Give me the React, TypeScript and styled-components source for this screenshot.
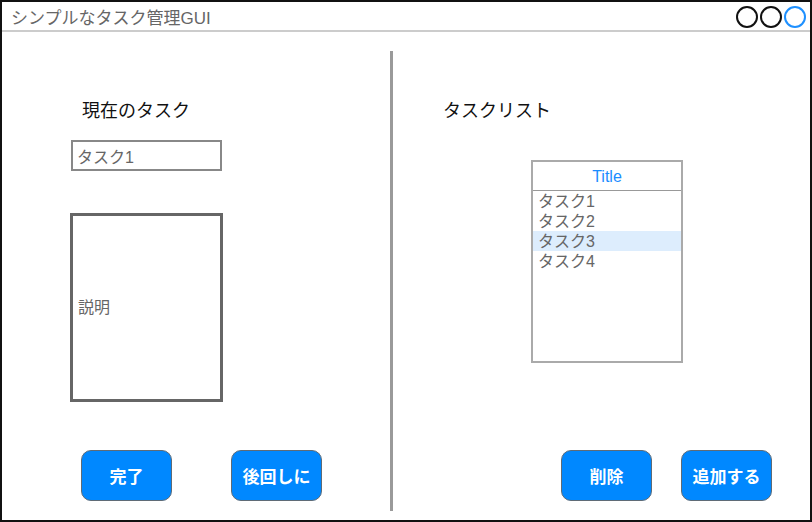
import React from 'react'
import styled, { createGlobalStyle } from 'styled-components'

const GlobalStyle = createGlobalStyle`
    html, body {
        margin: 0;
        padding: 0;
        background: #ffffff;
    }
    body {
        font-family: "Liberation Sans", "Noto Sans CJK JP", sans-serif;
    }
`

const Frame = styled.div`
    box-sizing: border-box;
    width: 812px;
    height: 522px;
    border: 2px solid #111111;
    display: flex;
    flex-direction: column;
    background: #ffffff;
`

const TitleBar = styled.div`
    display: flex;
    align-items: center;
    justify-content: space-between;
    height: 28px;
    padding: 0 4px 0 9px;
    border-bottom: 2px solid #cccccc;
`

const TitleText = styled.div`
    font-size: 17px;
    color: #666666;
`

const Controls = styled.div`
    display: flex;
    gap: 2px;
    margin-top: 2px;
`

const Circle = styled.div<{ $accent?: boolean }>`
    box-sizing: border-box;
    width: 22px;
    height: 22px;
    border-radius: 50%;
    border: 2px solid ${(p) => (p.$accent ? '#1e90ff' : '#111111')};
`

const Content = styled.div`
    flex: 1;
    display: flex;
`

const LeftPane = styled.div`
    width: 388px;
    display: flex;
    flex-direction: column;
`

const Divider = styled.div`
    width: 3px;
    margin: 19px 0 9px;
    background: #9a9a9a;
`

const RightPane = styled.div`
    flex: 1;
    display: flex;
    flex-direction: column;
`

const Heading = styled.div<{ $left: number }>`
    margin: 69px 0 0 ${(p) => p.$left}px;
    font-size: 18px;
    line-height: 20px;
    color: #111111;
`

const TaskInput = styled.div`
    box-sizing: border-box;
    width: 151px;
    height: 31px;
    margin: 19px 0 0 69px;
    padding: 0 4px;
    border: 2px solid #888888;
    display: flex;
    align-items: center;
    font-size: 16px;
    color: #666666;
`

const DescriptionBox = styled.div`
    box-sizing: border-box;
    width: 153px;
    height: 189px;
    margin: 42px 0 0 68px;
    padding: 0 5px 4px;
    border: 3px solid #666666;
    display: flex;
    align-items: center;
    font-size: 16px;
    color: #666666;
`

const ButtonRow = styled.div<{ $top: number; $left: number; $gap: number }>`
    display: flex;
    gap: ${(p) => p.$gap}px;
    margin: ${(p) => p.$top}px 0 0 ${(p) => p.$left}px;
`

const ActionButton = styled.button`
    box-sizing: border-box;
    width: 91px;
    height: 51px;
    border-radius: 10px;
    border: 1px solid #5f6b76;
    background: #0088ff;
    color: #ffffff;
    font-family: "Liberation Sans", "Noto Sans CJK JP", sans-serif;
    font-weight: 700;
    font-size: 17px;
    padding: 0;
`

const ListBox = styled.div`
    box-sizing: border-box;
    width: 152px;
    height: 203px;
    margin: 39px 0 0 138px;
    border: 2px solid #aaaaaa;
    display: flex;
    flex-direction: column;
`

const ListHeader = styled.div`
    box-sizing: border-box;
    height: 29px;
    padding-top: 2px;
    border-bottom: 1px solid #999999;
    display: flex;
    align-items: center;
    justify-content: center;
    font-size: 16px;
    color: #1a8cff;
`

const ListItem = styled.div<{ $selected?: boolean }>`
    height: 20px;
    line-height: 22px;
    padding-left: 5px;
    font-size: 16px;
    color: #666666;
    background: ${(p) => (p.$selected ? '#ddedfd' : 'transparent')};
`

const tasks = ['タスク1', 'タスク2', 'タスク3', 'タスク4']

const App = () => {
    return (
        <>
            <GlobalStyle />
            <Frame>
                <TitleBar>
                    <TitleText>シンプルなタスク管理GUI</TitleText>
                    <Controls>
                        <Circle />
                        <Circle />
                        <Circle $accent />
                    </Controls>
                </TitleBar>
                <Content>
                    <LeftPane>
                        <Heading $left={80}>現在のタスク</Heading>
                        <TaskInput>タスク1</TaskInput>
                        <DescriptionBox>説明</DescriptionBox>
                        <ButtonRow $top={48} $left={79} $gap={59}>
                            <ActionButton>完了</ActionButton>
                            <ActionButton>後回しに</ActionButton>
                        </ButtonRow>
                    </LeftPane>
                    <Divider />
                    <RightPane>
                        <Heading $left={50}>タスクリスト</Heading>
                        <ListBox>
                            <ListHeader>Title</ListHeader>
                            {tasks.map((t, i) => (
                                <ListItem key={t} $selected={i === 2}>
                                    {t}
                                </ListItem>
                            ))}
                        </ListBox>
                        <ButtonRow $top={87} $left={168} $gap={29}>
                            <ActionButton>削除</ActionButton>
                            <ActionButton>追加する</ActionButton>
                        </ButtonRow>
                    </RightPane>
                </Content>
            </Frame>
        </>
    )
}

export default App
